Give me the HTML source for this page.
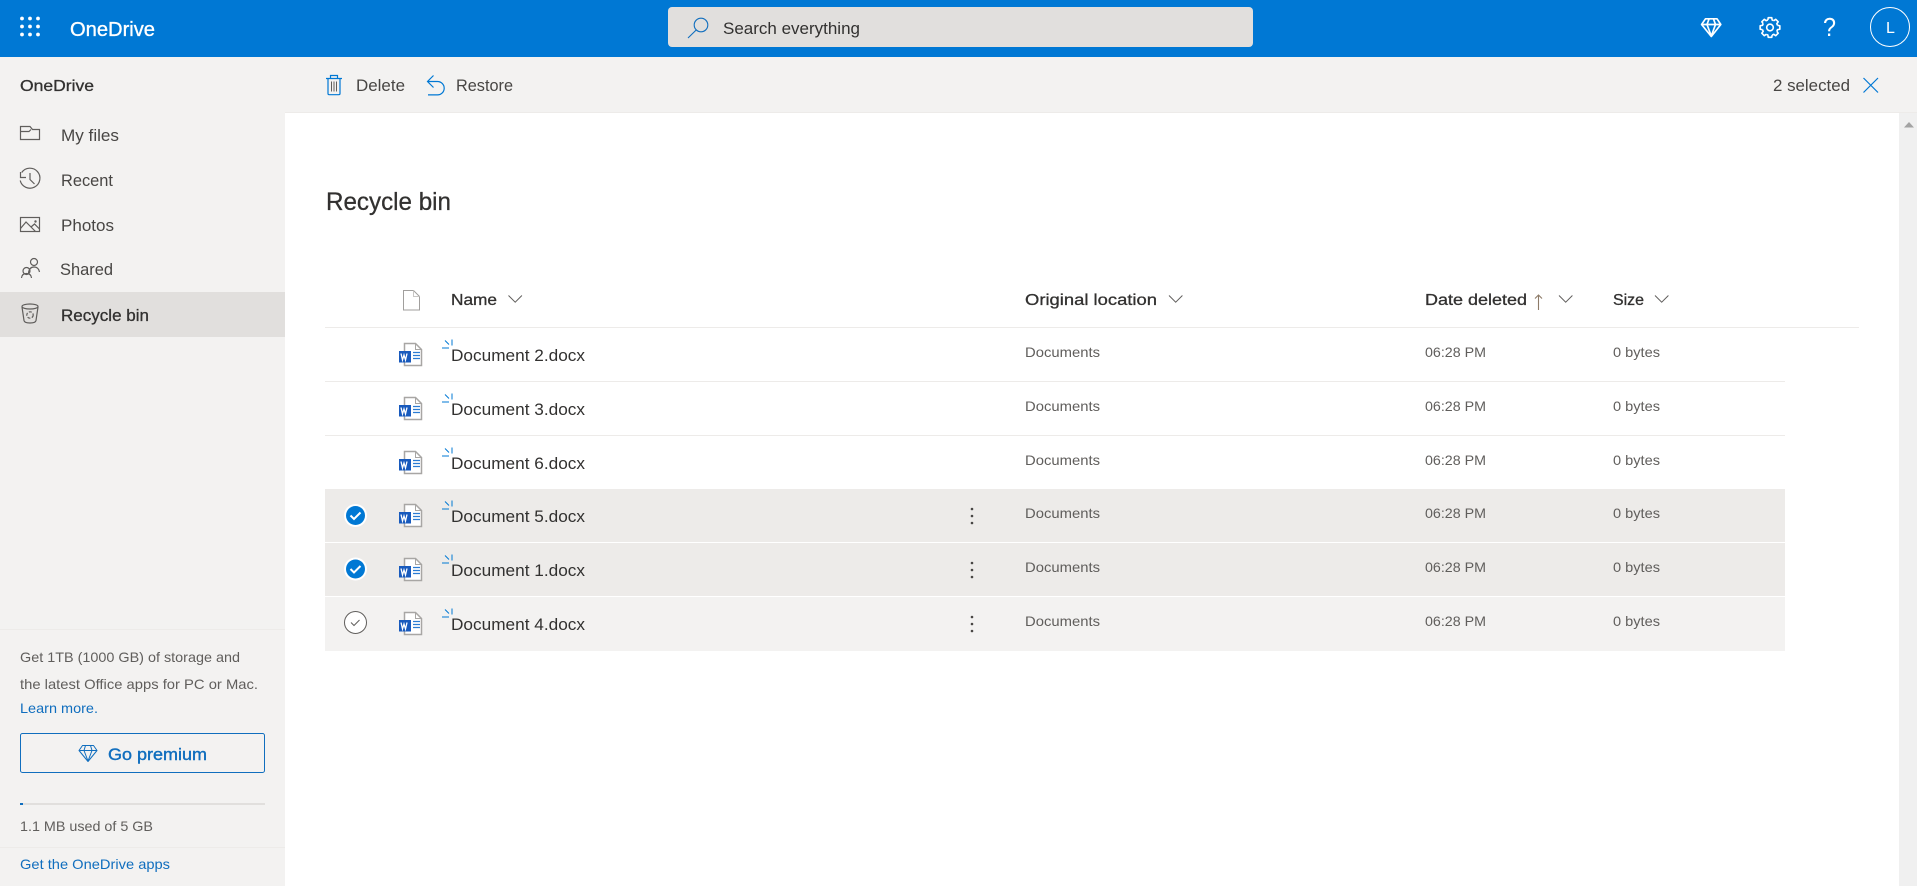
<!DOCTYPE html>
<html lang="en">
<head>
<meta charset="utf-8">
<title>Recycle bin - OneDrive</title>
<style>
html,body{margin:0;padding:0;width:1917px;height:886px;overflow:hidden;background:#fff}
svg{display:block;position:absolute;left:0;top:0}
text{font-family:"Liberation Sans",sans-serif;fill:#323130;font-size:16px;transform:translateY(-1px)}
text.n{transform:none}
.s{fill:#605e5c;font-size:14px}
.b{stroke:#323130;stroke-width:.3px}
.l{fill:#106ebe;font-size:14px}
</style>
</head>
<body>
<svg width="1917" height="886" viewBox="0 0 1917 886" xmlns="http://www.w3.org/2000/svg">
<defs>
<path id="gt" d="M7.5-2.15L9.85-1.74V1.74L7.5 2.15L6.82 3.78" fill="none" stroke="#fff" stroke-width="1.600" stroke-linejoin="round"/>
</defs>

<!-- backgrounds -->
<rect x="0" y="57" width="1917" height="829" fill="#f3f2f1"/>
<rect x="285" y="113" width="1614" height="773" fill="#fff"/>
<rect x="285" y="112" width="1632" height="1" fill="#edebe9"/>
<rect x="1899" y="113" width="18" height="773" fill="#f0f0f0"/>
<path d="M1909 122l5 5.500h-10z" fill="#a3a3a3"/>

<!-- top bar -->
<rect width="1917" height="57" fill="#0078d4"/>
<g fill="#fff">
<circle cx="22" cy="18.500" r="1.900"/><circle cx="30" cy="18.500" r="1.900"/><circle cx="38" cy="18.500" r="1.900"/>
<circle cx="22" cy="26.500" r="1.900"/><circle cx="30" cy="26.500" r="1.900"/><circle cx="38" cy="26.500" r="1.900"/>
<circle cx="22" cy="34.500" r="1.900"/><circle cx="30" cy="34.500" r="1.900"/><circle cx="38" cy="34.500" r="1.900"/>
</g>
<text x="70" y="36" class="n" style="fill:#fff;font-size:20px;stroke:#fff;stroke-width:.35px" textLength="85" lengthAdjust="spacingAndGlyphs">OneDrive</text>

<rect x="668" y="7" width="585" height="40" rx="4" fill="#e1dfdd"/>
<g fill="none" stroke="#106ebe" stroke-width="1.100">
<circle cx="701" cy="25" r="6.800"/><path d="M696.200 30L688 38"/>
</g>
<text x="723" y="35" textLength="137" lengthAdjust="spacingAndGlyphs" style="font-size:17px">Search everything</text>

<g fill="none" stroke="#fff" stroke-width="1.700" stroke-linejoin="round">
<path d="M1705.500 18.800h11.500l3.800 5.700-9.500 12-9.700-12z"/>
<path d="M1702 24.500h18.500M1707 24.500l4.300 11.500 4.200-11.500M1707 24.500l2-5.500M1715.500 24.500l-2-5.500"/>
</g>
<g transform="translate(1770 27.500)">
<circle r="3.300" fill="none" stroke="#fff" stroke-width="1.600"/>
<use href="#gt"/><use href="#gt" transform="rotate(45)"/><use href="#gt" transform="rotate(90)"/><use href="#gt" transform="rotate(135)"/><use href="#gt" transform="rotate(180)"/><use href="#gt" transform="rotate(225)"/><use href="#gt" transform="rotate(270)"/><use href="#gt" transform="rotate(315)"/>
</g>
<text x="1823" y="36" class="n" textLength="13" lengthAdjust="spacingAndGlyphs" style="fill:#fff;font-size:26px">?</text>
<circle cx="1890" cy="27" r="19.500" fill="none" stroke="#fff" stroke-width="1"/>
<text x="1886" y="33" class="n" style="fill:#fff;font-size:16px">L</text>

<!-- left nav -->
<text x="20" y="92" class="b" textLength="74" lengthAdjust="spacingAndGlyphs">OneDrive</text>
<rect x="0" y="292" width="285" height="45" fill="#e1dfdd"/>
<g fill="none" stroke="#605e5c" stroke-width="1.200">
<path d="M20.500 139.500V126.500h9.500l2.500 3h7v10z"/><path d="M20.500 131.500h8.500l2-2"/>
<path d="M21.700 172.500a10 10 0 1 1-1.500 8M20.500 172v5.500h5.500M30 173v6.500l4.500 4.500"/>
<rect x="20.500" y="217.500" width="19" height="14"/><path d="M20.500 228.500l5.500-6.500 9.500 9.500M31 227l3.500-3 5 5"/><circle cx="35.500" cy="221.500" r=".6"/>
<circle cx="34" cy="262" r="3.500"/><path d="M28.500 273c.5-4 2.500-6 5.500-6 3 0 5 2 5.500 5"/>
<circle cx="26.500" cy="271" r="3.500"/><path d="M21.500 278c.3-3 2.300-4.500 5-4.500 2.700 0 4.700 1.500 5 4.500"/>
<ellipse cx="30" cy="306.500" rx="8" ry="2.500"/><path d="M22 307l2 13.500c.3 1.700 3 2.500 6 2.500s5.700-.8 6-2.500l2-13.500"/><circle cx="30" cy="315" r="3.200" stroke-dasharray="3 1.500"/>
</g>
<text x="61" y="142" textLength="58" lengthAdjust="spacingAndGlyphs" style="fill:#484644;font-size:17px">My files</text>
<text x="61" y="187" textLength="52" lengthAdjust="spacingAndGlyphs" style="fill:#484644;font-size:17px">Recent</text>
<text x="61" y="232" textLength="53" lengthAdjust="spacingAndGlyphs" style="fill:#484644;font-size:17px">Photos</text>
<text x="60" y="276" textLength="53" lengthAdjust="spacingAndGlyphs" style="fill:#484644;font-size:17px">Shared</text>
<text x="61" y="322" class="b" textLength="88" lengthAdjust="spacingAndGlyphs" style="font-size:17px">Recycle bin</text>

<!-- sidebar bottom -->
<rect x="0" y="629" width="285" height="1" fill="#edebe9"/>
<text x="20" y="662" class="s n" textLength="220" lengthAdjust="spacingAndGlyphs">Get 1TB (1000 GB) of storage and</text>
<text x="20" y="689" class="s n" textLength="238" lengthAdjust="spacingAndGlyphs">the latest Office apps for PC or Mac.</text>
<text x="20" y="714" class="l" textLength="78" lengthAdjust="spacingAndGlyphs">Learn more.</text>
<rect x="20.500" y="733.500" width="244" height="39" rx="2" fill="none" stroke="#106ebe"/>
<g fill="none" stroke="#106ebe" stroke-width="1" stroke-linejoin="round">
<path d="M82.500 745.500h11l3.500 5-9 11-9-11z"/><path d="M79.500 750.500h17M84 750.500l4 10.500 4-10.500M84 750.500l1.500-5M92 750.500l-1.500-5"/>
</g>
<text x="108" y="761" textLength="99" lengthAdjust="spacingAndGlyphs" style="fill:#106ebe;font-size:17px;stroke:#106ebe;stroke-width:.4px">Go premium</text>
<rect x="20" y="803" width="245" height="2" fill="#e1dfdd"/>
<rect x="20" y="803" width="3" height="2" fill="#106ebe"/>
<text x="20" y="832" class="s" textLength="133" lengthAdjust="spacingAndGlyphs">1.1 MB used of 5 GB</text>
<rect x="0" y="847" width="285" height="1" fill="#edebe9"/>
<text x="20" y="870" class="l" textLength="150" lengthAdjust="spacingAndGlyphs">Get the OneDrive apps</text>

<!-- command bar -->
<g fill="none" stroke="#0078d4" stroke-width="1.200">
<path d="M326 78.500h16M330.500 78.500v-3h7v3M328 78.500v15c0 .8.500 1.200 1.200 1.200h9.600c.7 0 1.200-.4 1.200-1.200v-15"/>
</g>
<path d="M331.500 81.500v10M334 81.500v10M336.500 81.500v10" stroke="#605e5c" stroke-width="1" fill="none"/>
<text x="356" y="92" textLength="49" lengthAdjust="spacingAndGlyphs" style="fill:#484644;font-size:17px">Delete</text>
<path d="M433.500 75.500L427.500 81.500l6 6M427.500 81.500H437.500a6.700 6.700 0 0 1 0 13.400H428" fill="none" stroke="#0078d4" stroke-width="1.200"/>
<text x="456" y="92" textLength="57" lengthAdjust="spacingAndGlyphs" style="fill:#484644;font-size:17px">Restore</text>
<text x="1773" y="92" textLength="77" lengthAdjust="spacingAndGlyphs" style="fill:#484644;font-size:17px">2 selected</text>
<path d="M1863.500 78l14.500 14.500M1878 78l-14.500 14.500" fill="none" stroke="#0078d4" stroke-width="1.200"/>

<!-- title -->
<text x="326" y="211" class="b" textLength="125" lengthAdjust="spacingAndGlyphs" style="font-size:25px">Recycle bin</text>

<!-- list header -->
<path d="M403.500 290.500h10l6 6v13.500h-16z" fill="#fff" stroke="#a19f9d"/>
<path d="M413.500 290.500v6h6" fill="none" stroke="#c8c6c4"/>
<text x="451" y="306" class="b" textLength="46" lengthAdjust="spacingAndGlyphs">Name</text>
<text x="1025" y="306" class="b" textLength="132" lengthAdjust="spacingAndGlyphs">Original location</text>
<text x="1425" y="306" class="b" textLength="102" lengthAdjust="spacingAndGlyphs">Date deleted</text>
<text x="1613" y="306" class="b" textLength="31" lengthAdjust="spacingAndGlyphs">Size</text>
<g fill="none" stroke="#605e5c" stroke-width="1">
<path d="M508.500 295.500l6.700 6.700 6.700-6.700"/>
<path d="M1169 295.500l6.700 6.700 6.700-6.700"/>
<path d="M1559 295.500l6.700 6.700 6.700-6.700"/>
<path d="M1655 295.500l6.700 6.700 6.700-6.700"/>
</g>
<path d="M1538.500 310v-15M1535 298.500l3.500-3.500 3.500 3.500" fill="none" stroke="#8d7b68" stroke-width="1.100"/>
<rect x="325" y="327" width="1534" height="1" fill="#edebe9"/>

<!-- row backgrounds -->
<rect x="325" y="381" width="1460" height="1" fill="#edebe9"/>
<rect x="325" y="435" width="1460" height="1" fill="#edebe9"/>
<rect x="325" y="489" width="1460" height="53" fill="#edebe9"/>
<rect x="325" y="543" width="1460" height="53" fill="#edebe9"/>
<rect x="325" y="597" width="1460" height="54" fill="#f3f2f1"/>

<!-- row 1 -->
<g transform="translate(0 0)">
<path d="M404.500 343.500h11l6 6v16h-17z" fill="#fff" stroke="#a8a6a4" stroke-width="1.500"/><path d="M415.500 343.500v6h6" fill="none" stroke="#a8a6a4"/>
<rect x="399" y="351" width="12" height="11.500" fill="#185abd"/>
<path d="M401 353.500l1.500 6.500 1.500-5 1.500 5 1.500-6.500" fill="none" stroke="#fff" stroke-width="1.300"/>
<path d="M413 352.500h7M413 355.500h7M413 358.500h7" stroke="#2b7cd3" stroke-width="1.300" fill="none"/>
<path d="M442 348h7M445 340.500l4 4M452 339.500v6" stroke="#0078d4" stroke-width="1" fill="none"/>
</g>
<text x="451" y="362" textLength="134" lengthAdjust="spacingAndGlyphs" style="font-size:17px">Document 2.docx</text>
<text x="1025" y="358" class="s" textLength="75" lengthAdjust="spacingAndGlyphs">Documents</text>
<text x="1425" y="358" class="s" textLength="61" lengthAdjust="spacingAndGlyphs">06:28 PM</text>
<text x="1613" y="358" class="s" textLength="47" lengthAdjust="spacingAndGlyphs">0 bytes</text>

<!-- row 2 -->
<g transform="translate(0 54)">
<path d="M404.500 343.500h11l6 6v16h-17z" fill="#fff" stroke="#a8a6a4" stroke-width="1.500"/><path d="M415.500 343.500v6h6" fill="none" stroke="#a8a6a4"/>
<rect x="399" y="351" width="12" height="11.500" fill="#185abd"/>
<path d="M401 353.500l1.500 6.500 1.500-5 1.500 5 1.500-6.500" fill="none" stroke="#fff" stroke-width="1.300"/>
<path d="M413 352.500h7M413 355.500h7M413 358.500h7" stroke="#2b7cd3" stroke-width="1.300" fill="none"/>
<path d="M442 348h7M445 340.500l4 4M452 339.500v6" stroke="#0078d4" stroke-width="1" fill="none"/>
</g>
<text x="451" y="416" textLength="134" lengthAdjust="spacingAndGlyphs" style="font-size:17px">Document 3.docx</text>
<text x="1025" y="412" class="s" textLength="75" lengthAdjust="spacingAndGlyphs">Documents</text>
<text x="1425" y="412" class="s" textLength="61" lengthAdjust="spacingAndGlyphs">06:28 PM</text>
<text x="1613" y="412" class="s" textLength="47" lengthAdjust="spacingAndGlyphs">0 bytes</text>

<!-- row 3 -->
<g transform="translate(0 108)">
<path d="M404.500 343.500h11l6 6v16h-17z" fill="#fff" stroke="#a8a6a4" stroke-width="1.500"/><path d="M415.500 343.500v6h6" fill="none" stroke="#a8a6a4"/>
<rect x="399" y="351" width="12" height="11.500" fill="#185abd"/>
<path d="M401 353.500l1.500 6.500 1.500-5 1.500 5 1.500-6.500" fill="none" stroke="#fff" stroke-width="1.300"/>
<path d="M413 352.500h7M413 355.500h7M413 358.500h7" stroke="#2b7cd3" stroke-width="1.300" fill="none"/>
<path d="M442 348h7M445 340.500l4 4M452 339.500v6" stroke="#0078d4" stroke-width="1" fill="none"/>
</g>
<text x="451" y="470" textLength="134" lengthAdjust="spacingAndGlyphs" style="font-size:17px">Document 6.docx</text>
<text x="1025" y="466" class="s" textLength="75" lengthAdjust="spacingAndGlyphs">Documents</text>
<text x="1425" y="466" class="s" textLength="61" lengthAdjust="spacingAndGlyphs">06:28 PM</text>
<text x="1613" y="466" class="s" textLength="47" lengthAdjust="spacingAndGlyphs">0 bytes</text>

<!-- row 4 -->
<circle cx="355.500" cy="515.500" r="11.500" fill="#fff"/><circle cx="355.500" cy="515.500" r="9.500" fill="#0078d4"/>
<path d="M350.500 515.500l3.500 3.500 6.500-6.500" fill="none" stroke="#fff" stroke-width="2"/>
<g transform="translate(0 161)">
<path d="M404.500 343.500h11l6 6v16h-17z" fill="#fff" stroke="#a8a6a4" stroke-width="1.500"/><path d="M415.500 343.500v6h6" fill="none" stroke="#a8a6a4"/>
<rect x="399" y="351" width="12" height="11.500" fill="#185abd"/>
<path d="M401 353.500l1.500 6.500 1.500-5 1.500 5 1.500-6.500" fill="none" stroke="#fff" stroke-width="1.300"/>
<path d="M413 352.500h7M413 355.500h7M413 358.500h7" stroke="#2b7cd3" stroke-width="1.300" fill="none"/>
<path d="M442 348h7M445 340.500l4 4M452 339.500v6" stroke="#0078d4" stroke-width="1" fill="none"/>
</g>
<text x="451" y="523" textLength="134" lengthAdjust="spacingAndGlyphs" style="font-size:17px">Document 5.docx</text>
<g fill="#484644"><circle cx="972" cy="509" r="1.300"/><circle cx="972" cy="516" r="1.300"/><circle cx="972" cy="523" r="1.300"/></g>
<text x="1025" y="519" class="s" textLength="75" lengthAdjust="spacingAndGlyphs">Documents</text>
<text x="1425" y="519" class="s" textLength="61" lengthAdjust="spacingAndGlyphs">06:28 PM</text>
<text x="1613" y="519" class="s" textLength="47" lengthAdjust="spacingAndGlyphs">0 bytes</text>

<!-- row 5 -->
<circle cx="355.500" cy="569" r="11.500" fill="#fff"/><circle cx="355.500" cy="569" r="9.500" fill="#0078d4"/>
<path d="M350.500 569l3.500 3.500 6.500-6.500" fill="none" stroke="#fff" stroke-width="2"/>
<g transform="translate(0 215)">
<path d="M404.500 343.500h11l6 6v16h-17z" fill="#fff" stroke="#a8a6a4" stroke-width="1.500"/><path d="M415.500 343.500v6h6" fill="none" stroke="#a8a6a4"/>
<rect x="399" y="351" width="12" height="11.500" fill="#185abd"/>
<path d="M401 353.500l1.500 6.500 1.500-5 1.500 5 1.500-6.500" fill="none" stroke="#fff" stroke-width="1.300"/>
<path d="M413 352.500h7M413 355.500h7M413 358.500h7" stroke="#2b7cd3" stroke-width="1.300" fill="none"/>
<path d="M442 348h7M445 340.500l4 4M452 339.500v6" stroke="#0078d4" stroke-width="1" fill="none"/>
</g>
<text x="451" y="577" textLength="134" lengthAdjust="spacingAndGlyphs" style="font-size:17px">Document 1.docx</text>
<g fill="#484644"><circle cx="972" cy="563" r="1.300"/><circle cx="972" cy="570" r="1.300"/><circle cx="972" cy="577" r="1.300"/></g>
<text x="1025" y="573" class="s" textLength="75" lengthAdjust="spacingAndGlyphs">Documents</text>
<text x="1425" y="573" class="s" textLength="61" lengthAdjust="spacingAndGlyphs">06:28 PM</text>
<text x="1613" y="573" class="s" textLength="47" lengthAdjust="spacingAndGlyphs">0 bytes</text>

<!-- row 6 -->
<circle cx="355.500" cy="622.500" r="11" fill="#fff" stroke="#605e5c" stroke-width="1"/>
<path d="M351 622.500l3 3 5.500-5.500" fill="none" stroke="#605e5c" stroke-width="1"/>
<g transform="translate(0 269)">
<path d="M404.500 343.500h11l6 6v16h-17z" fill="#fff" stroke="#a8a6a4" stroke-width="1.500"/><path d="M415.500 343.500v6h6" fill="none" stroke="#a8a6a4"/>
<rect x="399" y="351" width="12" height="11.500" fill="#185abd"/>
<path d="M401 353.500l1.500 6.500 1.500-5 1.500 5 1.500-6.500" fill="none" stroke="#fff" stroke-width="1.300"/>
<path d="M413 352.500h7M413 355.500h7M413 358.500h7" stroke="#2b7cd3" stroke-width="1.300" fill="none"/>
<path d="M442 348h7M445 340.500l4 4M452 339.500v6" stroke="#0078d4" stroke-width="1" fill="none"/>
</g>
<text x="451" y="631" textLength="134" lengthAdjust="spacingAndGlyphs" style="font-size:17px">Document 4.docx</text>
<g fill="#484644"><circle cx="972" cy="617" r="1.300"/><circle cx="972" cy="624" r="1.300"/><circle cx="972" cy="631" r="1.300"/></g>
<text x="1025" y="627" class="s" textLength="75" lengthAdjust="spacingAndGlyphs">Documents</text>
<text x="1425" y="627" class="s" textLength="61" lengthAdjust="spacingAndGlyphs">06:28 PM</text>
<text x="1613" y="627" class="s" textLength="47" lengthAdjust="spacingAndGlyphs">0 bytes</text>
</svg>
</body>
</html>
